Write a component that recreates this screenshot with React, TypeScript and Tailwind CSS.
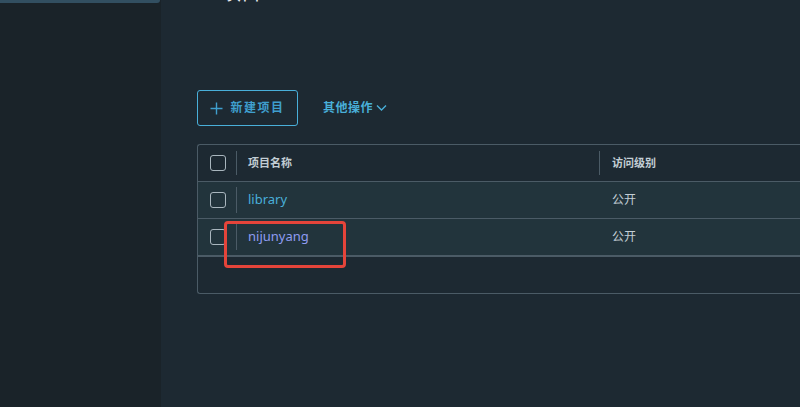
import React from 'react';

const cjk = { fontFamily: '"Noto Sans", "Noto Sans CJK SC", sans-serif' };

const Checkbox: React.FC = () => (
  <div className="w-[16px] h-[16px] rounded-[3px] border border-[#a9b6be]" />
);

const App: React.FC = () => {
  const rows = [
    { name: 'library', color: 'text-[#49afd9]', access: '公开' },
    { name: 'nijunyang', color: 'text-[#8f9cf2]', access: '公开' },
  ];

  return (
    <div className="flex w-[800px] h-[407px] overflow-hidden bg-[#1d2932]" style={cjk}>
      {/* Sidebar */}
      <aside className="w-[161px] shrink-0 bg-[#1a2329]">
        <div className="h-[3px] w-[160px] bg-[#324f61] rounded-br-[4px]" />
      </aside>

      {/* Main */}
      <main className="flex-1 pl-[36px] overflow-hidden">
        <h2 className="text-[20px] leading-[20px] text-[#e9ecef] mt-[-17px] ml-[24px]">项目</h2>

        <div className="flex items-center mt-[87px] h-[36px]">
          <button className="h-[36px] w-[101px] flex items-center justify-center gap-[7px] rounded-[3px] border border-[#49afd9] text-[#3f9fce] text-[12px] font-semibold tracking-[1.5px]">
            <svg width="13" height="13" viewBox="0 0 13 13" className="shrink-0">
              <path d="M6.5 0.5v12M0.5 6.5h12" stroke="#3f9fce" strokeWidth="1.4" />
            </svg>
            <span>新建项目</span>
          </button>
          <div className="ml-[25px] flex items-center gap-[3px] text-[#49afd9] text-[12px] font-semibold tracking-[0.5px]">
            <span>其他操作</span>
            <svg width="11" height="8" viewBox="0 0 11 8">
              <path d="M1 1.5l4.5 4.5L10 1.5" stroke="#49afd9" strokeWidth="1.4" fill="none" />
            </svg>
          </div>
        </div>

        {/* Table */}
        <div className="mt-[18px] w-[640px] rounded-l-[3px] border border-r-0 border-[#4b5b66]">
          {/* Header */}
          <div className="flex items-center h-[37px] border-b border-[#4b5b66] text-[11px] font-bold text-[#c3ced5]">
            <div className="w-[38px] flex items-center justify-end pr-[10px]">
              <Checkbox />
            </div>
            <div className="w-[363px] h-[24px] flex items-center pl-[11px] border-l border-[#4b5b66]">项目名称</div>
            <div className="flex-1 h-[24px] flex items-center pl-[12px] border-l border-[#4b5b66]">访问级别</div>
          </div>

          {rows.map((r, i) => (
            <div
              key={r.name}
              className={`flex items-center bg-[#22343c] ${i === rows.length - 1 ? 'h-[38px] border-b-2 border-[#4b5b66]' : 'h-[37px] border-b border-[#4b5b66]'}`}
            >
              <div className="w-[38px] flex items-center justify-end pr-[10px]">
                <Checkbox />
              </div>
              <div className={`w-[363px] h-[26px] flex items-center pl-[11px] border-l border-[#4b5b66] text-[13px] ${r.color}`}>
                {r.name}
              </div>
              <div className="flex-1 pl-[13px] text-[12px] text-[#c3ced5]">{r.access}</div>
            </div>
          ))}

          <div className="h-[36px]" />
        </div>
      </main>

      {/* Red annotation */}
      <div className="absolute left-[224px] top-[221px] w-[122px] h-[47px] rounded-[4px] border-[3px] border-[#e5443a]" />
    </div>
  );
};

export default App;
